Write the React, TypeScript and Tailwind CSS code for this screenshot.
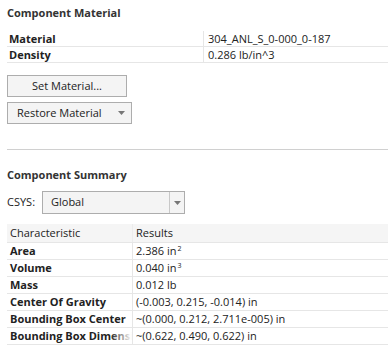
import React from "react";

function Arrow() {
  return (
    <svg width="7" height="4" viewBox="0 0 7 4" className="block">
      <path d="M0 0 H7 L3.5 4 Z" fill="#777" />
    </svg>
  );
}

const Sup = ({ children }: { children: React.ReactNode }) => (
  <sup className="text-[7px] relative -top-[4px] ml-[1px]">{children}</sup>
);

const rows: { k: string; v: React.ReactNode; fade?: boolean }[] = [
  { k: "Area", v: <>2.386 in<Sup>2</Sup></> },
  { k: "Volume", v: <>0.040 in<Sup>3</Sup></> },
  { k: "Mass", v: "0.012 lb" },
  { k: "Center Of Gravity", v: "(-0.003, 0.215, -0.014) in" },
  { k: "Bounding Box Center", v: "~(0.000, 0.212, 2.711e-005) in" },
  { k: "Bounding Box Dimensions", v: "~(0.622, 0.490, 0.622) in", fade: true },
];

export default function App() {
  return (
    <div
      className="w-[388px] h-[352px] bg-white pl-[7px] text-[11px] text-[#222] overflow-hidden"
      style={{ fontFamily: '"Open Sans", "Noto Sans", sans-serif' }}
    >
      <div className="h-[31px] pt-[5px] leading-[16px] font-bold text-[#333]">Component Material</div>
      <div className="flex h-[16px] border-b border-[#e6e6e6] leading-[15px]">
        <div className="w-[197px] border-r border-[#e6e6e6] font-bold pl-[2px]">Material</div>
        <div className="pl-[4px]">304_ANL_S_0-000_0-187</div>
      </div>
      <div className="flex h-[16px] border-b border-[#e6e6e6] leading-[15px]">
        <div className="w-[197px] border-r border-[#e6e6e6] font-bold pl-[2px]">Density</div>
        <div className="pl-[4px]">0.286 lb/in^3</div>
      </div>
      <div className="mt-[12px] flex h-[22px] w-[120px] items-center justify-center border border-[#adadad] bg-[#f4f4f4]">
        Set Material...
      </div>
      <div className="mt-[5px] flex h-[22px] w-[125px] items-center justify-between border border-[#adadad] bg-[#f4f4f4] pl-[9px] pr-[6px]">
        <span>Restore Material</span>
        <Arrow />
      </div>
      <div className="mt-[25px] h-px bg-[#d0d0d0]" />
      <div className="h-[41px] pt-[17px] leading-[16px] font-bold text-[#333]">Component Summary</div>
      <div className="flex items-center h-[23px]">
        <span className="w-[35px]">CSYS:</span>
        <div className="flex h-[23px] w-[143px] border border-[#adadad] bg-[#f4f4f4]">
          <div className="flex-1 flex items-center pl-[8px]">Global</div>
          <div className="w-[15px] border-l border-[#c8c8c8] flex items-center justify-center">
            <Arrow />
          </div>
        </div>
      </div>
      <div className="mt-[10px] flex h-[19px] bg-[#f5f5f5] border-b border-[#e6e6e6] leading-[18px]">
        <div className="w-[126px] pl-[3px] border-r border-[#ececec]">Characteristic</div>
        <div className="pl-[3px]">Results</div>
      </div>
      {rows.map((r) => (
        <div key={r.k} className="flex h-[17px] border-b border-[#e6e6e6] leading-[16px]">
          <div className="relative w-[126px] pl-[3px] border-r border-[#e6e6e6] font-bold whitespace-nowrap overflow-hidden">
            {r.k}
            {r.fade && (
              <div className="absolute right-0 top-0 h-full w-[22px] bg-gradient-to-r from-transparent to-white" />
            )}
          </div>
          <div className="pl-[3px] whitespace-nowrap">{r.v}</div>
        </div>
      ))}
    </div>
  );
}
